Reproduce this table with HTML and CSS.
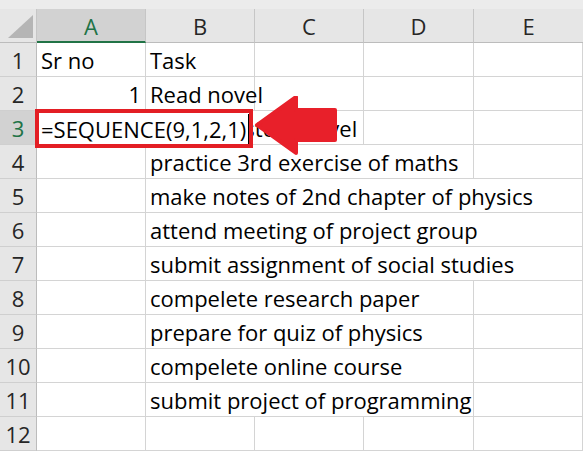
FILE: index.html
```html
<!DOCTYPE html>
<html>
<head>
<meta charset="utf-8">
<link rel="stylesheet" href="styles.css">
</head>
<body>
<div class="sheet">
  <div class="topband"></div>
  <div class="grid">
    <div class="corner"><svg width="37" height="33" viewBox="0 0 37 33"><polygon points="8,29 33,6 33,29" fill="#b5b5b5"/></svg></div>
    <div class="colhead sel">A</div>
    <div class="colhead">B</div>
    <div class="colhead">C</div>
    <div class="colhead">D</div>
    <div class="colhead last">E</div>

    <div class="rowhead">1</div>
    <div class="cell">Sr no</div>
    <div class="cell">Task</div>
    <div class="cell"></div>
    <div class="cell"></div>
    <div class="cell"></div>

    <div class="rowhead">2</div>
    <div class="cell num">1</div>
    <div class="cell">Read novel</div>
    <div class="cell"></div>
    <div class="cell"></div>
    <div class="cell"></div>

    <div class="rowhead sel">3</div>
    <div class="cell"></div>
    <div class="cell span2">Read a history novel</div>
    <div class="cell"></div>
    <div class="cell"></div>

    <div class="rowhead">4</div>
    <div class="cell"></div>
    <div class="cell span3">practice 3rd exercise of maths</div>
    <div class="cell"></div>

    <div class="rowhead">5</div>
    <div class="cell"></div>
    <div class="cell span4">make notes of 2nd chapter of physics</div>

    <div class="rowhead">6</div>
    <div class="cell"></div>
    <div class="cell span4">attend meeting of project group</div>

    <div class="rowhead">7</div>
    <div class="cell"></div>
    <div class="cell span4">submit assignment of social studies</div>

    <div class="rowhead">8</div>
    <div class="cell"></div>
    <div class="cell span3">compelete research paper</div>
    <div class="cell"></div>

    <div class="rowhead">9</div>
    <div class="cell"></div>
    <div class="cell span3">prepare for quiz of physics</div>
    <div class="cell"></div>

    <div class="rowhead">10</div>
    <div class="cell"></div>
    <div class="cell span3">compelete online course</div>
    <div class="cell"></div>

    <div class="rowhead">11</div>
    <div class="cell"></div>
    <div class="cell span3">submit project of programming</div>
    <div class="cell"></div>

    <div class="rowhead">12</div>
    <div class="cell"></div>
    <div class="cell"></div>
    <div class="cell"></div>
    <div class="cell"></div>
    <div class="cell"></div>
  </div>

  <div class="editbox"><span class="formula">=SEQUENCE(9,1,2,1)</span><span class="caret"></span></div>
  <svg class="arrow" width="100" height="70" viewBox="0 0 100 70">
    <polygon points="4,29 43,1 43,14 82,14 82,44 43,44 43,57" fill="#e8202a" stroke="#e8202a" stroke-width="4" stroke-linejoin="round"/>
  </svg>
</div>
</body>
</html>
```

FILE: styles.css
```css
html, body {
  margin: 0;
  padding: 0;
  background: #ffffff;
}
body {
  width: 583px;
  height: 452px;
  overflow: hidden;
  font-family: "Open Sans", "Noto Sans", sans-serif;
  font-size: 22px;
  color: #000;
}
.sheet {
  position: relative;
  width: 583px;
  height: 452px;
  overflow: hidden;
}
.topband {
  height: 9px;
  background: #ececec;
}
.grid {
  display: grid;
  grid-template-columns: 37px 109px 109px 109px 110px 109px;
  grid-template-rows: 34px repeat(12, 34px);
}
.corner {
  background: #e6e6e6;
  border-right: 1px solid #c6c6c6;
  border-bottom: 1px solid #bcbcbc;
  box-sizing: border-box;
}
.corner svg { display: block; }
.colhead {
  background: #e6e6e6;
  border-right: 1px solid #c6c6c6;
  border-bottom: 1px solid #bcbcbc;
  box-sizing: border-box;
  display: flex;
  align-items: center;
  justify-content: center;
  color: #262626;
  padding-top: 1px;
}
.colhead.last { border-right: none; }
.colhead.sel {
  background: #d2d2d2;
  color: #217346;
  border-bottom: 2px solid #217346;
}
.rowhead {
  background: #e6e6e6;
  border-right: 1px solid #bcbcbc;
  border-bottom: 1px solid #cfcfcf;
  box-sizing: border-box;
  display: flex;
  align-items: center;
  justify-content: center;
  color: #262626;
}
.rowhead.sel {
  background: #d2d2d2;
  color: #217346;
}
.cell {
  border-right: 1px solid #d4d4d4;
  border-bottom: 1px solid #d4d4d4;
  box-sizing: border-box;
  padding: 0 4px;
  display: flex;
  align-items: center;
  white-space: nowrap;
  overflow: visible;
}
.cell.num { justify-content: flex-end; }
.span2 { grid-column: span 2; }
.span3 { grid-column: span 3; }
.span4 { grid-column: span 4; }
.editbox {
  position: absolute;
  left: 35px;
  top: 109px;
  width: 218px;
  height: 39px;
  box-sizing: border-box;
  border: 4px solid #e31e24;
  background: #fff;
  display: flex;
  align-items: center;
  padding: 0 0 0 2px;
  white-space: nowrap;
}
.caret {
  display: inline-block;
  width: 2px;
  height: 30px;
  background: #000;
  margin-left: 2px;
}
.arrow {
  position: absolute;
  left: 253px;
  top: 96px;
}
```
